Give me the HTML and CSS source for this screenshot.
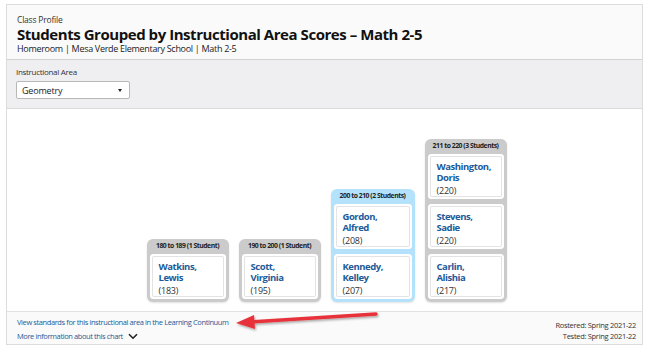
FILE: index.html
```html
<!DOCTYPE html>
<html lang="en">
<head>
  <meta charset="UTF-8" />
  <title>Class Profile</title>
  <link rel="stylesheet" href="styles.css">
</head>
<body>
  <div class="panel">
    <!-- Header -->
    <div class="head">
      <div class="kicker">Class Profile</div>
      <h1 class="title">Students Grouped by Instructional Area Scores – Math 2-5</h1>
      <div class="sub">Homeroom | Mesa Verde Elementary School | Math 2-5</div>
    </div>

    <!-- Filter -->
    <div class="filter">
      <div class="filter-label">Instructional Area</div>
      <div class="select">
        <span>Geometry</span>
        <span class="caret"></span>
      </div>
    </div>

    <!-- Chart -->
    <div class="chart">
      <div class="col">
        <div class="col-head">180 to 189 (1 Student)</div>
        <div class="card"><div class="name">Watkins,<br>Lewis</div><div class="score">(183)</div></div>
      </div>
      <div class="col">
        <div class="col-head">190 to 200 (1 Student)</div>
        <div class="card"><div class="name">Scott,<br>Virginia</div><div class="score">(195)</div></div>
      </div>
      <div class="col col-blue">
        <div class="col-head">200 to 210 (2 Students)</div>
        <div class="card"><div class="name">Gordon,<br>Alfred</div><div class="score">(208)</div></div>
        <div class="card"><div class="name">Kennedy,<br>Kelley</div><div class="score">(207)</div></div>
      </div>
      <div class="col">
        <div class="col-head">211 to 220 (3 Students)</div>
        <div class="card"><div class="name">Washington,<br>Doris</div><div class="score">(220)</div></div>
        <div class="card"><div class="name">Stevens,<br>Sadie</div><div class="score">(220)</div></div>
        <div class="card"><div class="name">Carlin,<br>Alishia</div><div class="score">(217)</div></div>
      </div>
    </div>

    <!-- Footer -->
    <div class="foot">
      <div class="foot-links">
        <a href="#">View standards for this instructional area in the Learning Continuum</a>
        <a href="#" class="more">More information about this chart
          <svg width="10" height="7" viewBox="0 0 10 7"><path d="M1 1.2 L5 5.2 L9 1.2" fill="none" stroke="#222" stroke-width="1.6"/></svg>
        </a>
      </div>
      <div class="foot-meta">
        <div>Rostered: Spring 2021-22</div>
        <div>Tested: Spring 2021-22</div>
      </div>
    </div>
  </div>

  <!-- annotation arrow -->
  <svg class="arrow" width="647" height="346" viewBox="0 0 647 346">
    <defs>
      <filter id="sh" x="-10%" y="-50%" width="120%" height="200%">
        <feDropShadow dx="1" dy="1.5" stdDeviation="1" flood-color="#000" flood-opacity="0.35"/>
      </filter>
    </defs>
    <g filter="url(#sh)">
      <line x1="376" y1="314" x2="250" y2="322" stroke="#e8333a" stroke-width="3.5" stroke-linecap="round"/>
      <path d="M236 323 L254 315 L255 329 Z" fill="#e8333a"/>
    </g>
  </svg>
</body>
</html>
```

FILE: styles.css
```css
html, body { margin:0; padding:0; }
body {
  background:#fff;
  font-family:"Open Sans", "Noto Sans", sans-serif;
  color:#222;
  position:relative;
  width:647px;
  height:346px;
  overflow:hidden;
}
.panel {
  margin:4px 0 0 6px;
  width:637px;
  height:341px;
  border:1px solid #dcdcdc;
  display:flex;
  flex-direction:column;
  box-sizing:border-box;
}
/* Header */
.head {
  background:#fafafa;
  padding:9px 10px 5px;
  border-bottom:1px solid #d2d2d2;
}
.kicker { font-size:8.5px; line-height:11px; color:#333; letter-spacing:-0.2px; }
.title {
  margin:1px 0 0;
  font-size:15px;
  line-height:17px;
  font-weight:700;
  letter-spacing:-0.45px;
  color:#111;
}
.sub { font-size:9px; line-height:11px; color:#222; letter-spacing:-0.3px; }
/* Filter */
.filter {
  background:#efeff1;
  padding:7px 9px 9px;
  border-bottom:1px solid #dadada;
}
.filter-label { font-size:8px; line-height:10px; color:#333; margin-bottom:4px; letter-spacing:-0.3px; }
.select {
  width:114px;
  height:18px;
  box-sizing:border-box;
  background:#fff;
  border:1px solid #b8b8b8;
  border-radius:2px;
  display:flex;
  align-items:center;
  justify-content:space-between;
  padding:0 7px 0 5px;
  font-size:9px;
  letter-spacing:-0.2px;
  color:#222;
}
.caret {
  width:0; height:0;
  border-left:2.5px solid transparent;
  border-right:2.5px solid transparent;
  border-top:3px solid #222;
}
/* Chart */
.chart {
  flex:1;
  display:flex;
  justify-content:center;
  align-items:flex-end;
  gap:10px;
  padding:0 0 9px 4px;
  border-bottom:1px solid #e2e2e2;
}
.col {
  width:82px;
  background:#cbcbcb;
  border-radius:6px;
  padding:0 3px 3px;
  box-sizing:border-box;
  display:flex;
  flex-direction:column;
  gap:5px;
  box-shadow:0 1px 2px rgba(0,0,0,0.12);
}
.col-blue { background:#b4e1fb; width:84px; }
.col-head {
  font-size:6.8px;
  font-weight:700;
  line-height:14px;
  height:14px;
  text-align:center;
  color:#222;
  letter-spacing:-0.45px;
  margin-bottom:-4px;
}
.card {
  background:#fff;
  border-radius:4px;
  height:45px;
  box-sizing:border-box;
  box-shadow:inset 0 0 0 2px #fff, inset 0 0 0 3px #e3e3e3;
  padding:7px 9px 0;
}
.name {
  font-size:9.5px;
  line-height:11px;
  font-weight:700;
  color:#1d5a99;
  letter-spacing:-0.45px;
}
.score { font-size:9px; line-height:11px; margin-top:2px; color:#333; letter-spacing:-0.2px; }
/* Footer */
.foot {
  background:#fafafa;
  display:flex;
  justify-content:space-between;
  align-items:flex-end;
  padding:6px 6px 2px 10px;
  height:32px;
  box-sizing:border-box;
}
.foot-links { display:flex; flex-direction:column; gap:3px; }
.foot-links a {
  font-size:7.5px;
  line-height:11px;
  color:#1f5a98;
  text-decoration:none;
  letter-spacing:-0.4px;
}
.more svg { margin-left:4px; vertical-align:-1px; }
.foot-meta { text-align:right; font-size:7.5px; line-height:11px; color:#333; letter-spacing:-0.3px; }
.arrow { position:absolute; left:0; top:0; pointer-events:none; }
```
